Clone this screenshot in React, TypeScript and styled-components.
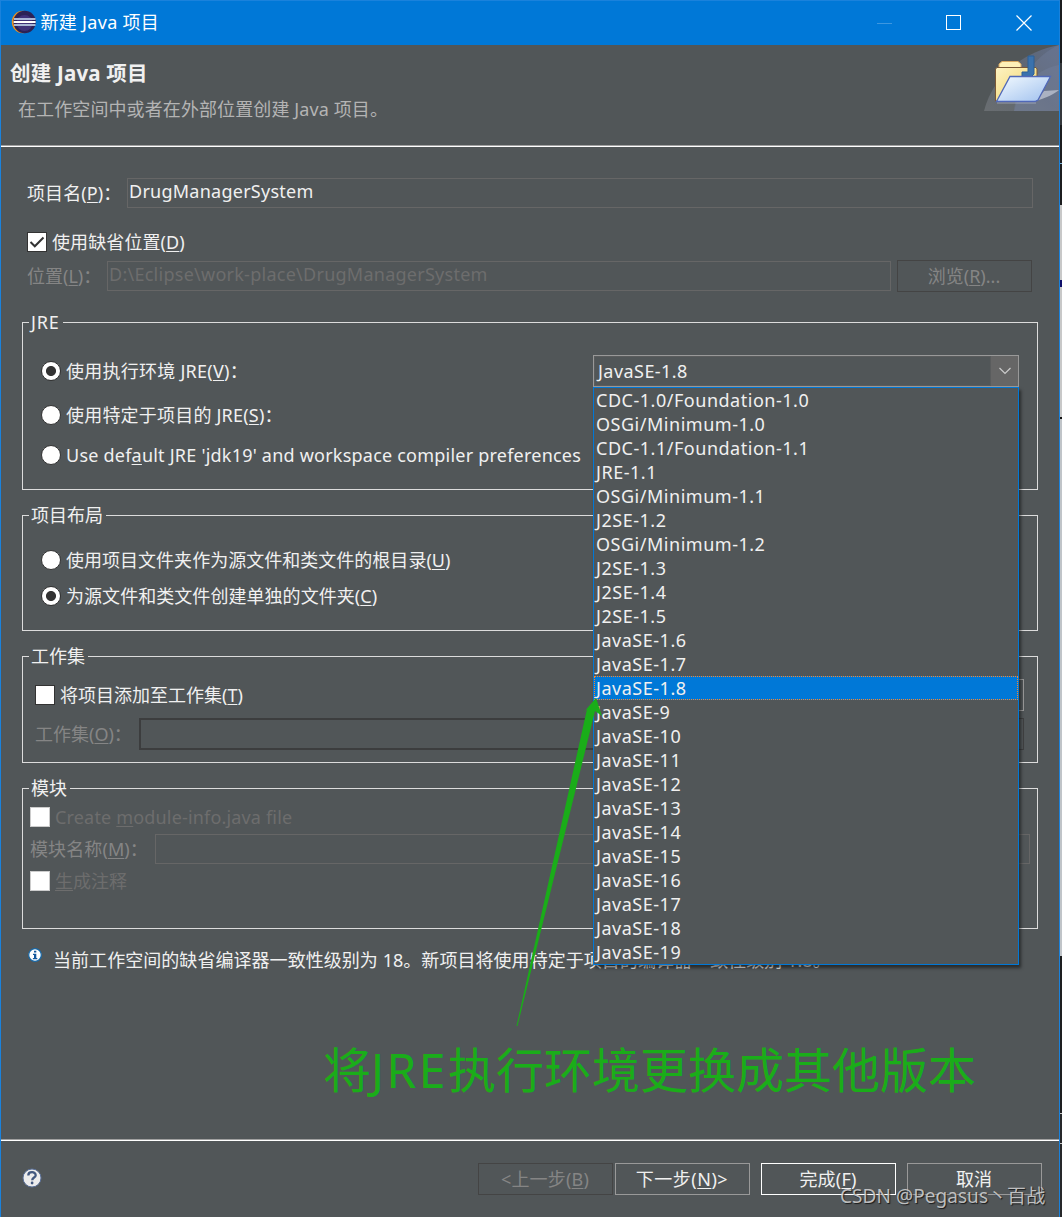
import React from "react";
import styled, { createGlobalStyle } from "styled-components";

const BG = "#515658";
const TEXT = "#f0f0f0";

const GlobalStyle = createGlobalStyle`
  * { box-sizing: border-box; }
  body { margin: 0; background: ${BG}; overflow: hidden; }
  body, button, input {
    font-family: "Noto Sans", "Noto Sans CJK SC", sans-serif;
    font-size: 18px;
    font-weight: 400;
  }
  u { text-decoration: underline; text-decoration-thickness: 1px; text-underline-offset: 2px; text-decoration-skip-ink: none; }
`;

const Screen = styled.div`
  position: relative;
  display: flex;
  width: 1062px;
  height: 1217px;
  overflow: hidden;
  color: ${TEXT};
`;

const Window = styled.div`
  display: flex;
  flex-direction: column;
  width: 1060px;
  height: 1217px;
  background: ${BG};
  border-left: 1px solid #1a82dc;
  border-right: 1px solid #1a82dc;
`;

const Backdrop = styled.div`
  display: flex;
  flex-direction: column;
  width: 2px;
`;
const Strip = styled.div<{ $h: number; $c: string }>`
  height: ${(p) => p.$h}px;
  background: ${(p) => p.$c};
`;

const TitleBar = styled.header`
  display: flex;
  align-items: center;
  height: 45px;
  flex: none;
  padding: 0 0 2px 10px;
  background: #0078d7;
  border-top: 1px solid #1a82dc;
  color: #fff;
`;
const WindowTitle = styled.span`
  flex: 1;
  margin-left: 4.5px;
  line-height: 24px;
  letter-spacing: 0.3px;
`;
const Caption = styled.div<{ $w?: number }>`
  display: flex;
  width: ${(p) => p.$w ?? 71}px;
  justify-content: center;
  padding-top: 1px;
`;

const Banner = styled.section`
  display: flex;
  justify-content: space-between;
  height: 102px;
  flex: none;
  border-bottom: 1px solid #fff;
  box-shadow: inset 0 -1px 0 #a0a0a0;
`;
const BannerText = styled.div`
  display: flex;
  flex-direction: column;
  padding: 16px 0 0 9px;
`;
const Heading = styled.h1`
  margin: 0;
  font-size: 20.5px;
  font-weight: 700;
  line-height: 24px;
  letter-spacing: 0.2px;
`;
const Description = styled.p`
  margin: 12px 0 0 8px;
  line-height: 24px;
  letter-spacing: 0.1px;
  color: #b4b4b4;
`;

const Body = styled.main`
  display: flex;
  flex-direction: column;
  height: 992px;
  flex: none;
  padding: 31px 21px 0;
`;

const Row = styled.div<{ $h: number; $mt?: number; $pl?: number; $pr?: number }>`
  display: flex;
  align-items: center;
  flex: none;
  height: ${(p) => p.$h}px;
  margin-top: ${(p) => p.$mt ?? 0}px;
  padding-left: ${(p) => p.$pl ?? 0}px;
  padding-right: ${(p) => p.$pr ?? 0}px;
`;

const Label = styled.span<{ $w?: number; $tone?: string; $ls?: number }>`
  flex: none;
  width: ${(p) => (p.$w ? p.$w + "px" : "auto")};
  line-height: 24px;
  white-space: pre;
  color: ${(p) => p.$tone ?? TEXT};
  letter-spacing: ${(p) => p.$ls ?? 0}px;
`;

const Field = styled.div<{ $tone?: string; $ls?: number }>`
  flex: 1;
  height: 30px;
  padding: 0 1px;
  line-height: 24px;
  border: 1px solid #666;
  color: ${(p) => p.$tone ?? TEXT};
  letter-spacing: ${(p) => p.$ls ?? 0}px;
`;

const Button = styled.button<{ $edge: string; $tone?: string; $ml?: number; $ls?: number }>`
  flex: none;
  width: 135px;
  height: 32px;
  margin: 0 0 0 ${(p) => p.$ml ?? 0}px;
  padding: 0 1px 0 0;
  line-height: 24px;
  background: ${BG};
  border: 1px solid ${(p) => p.$edge};
  color: ${(p) => p.$tone ?? TEXT};
  letter-spacing: ${(p) => p.$ls ?? 0}px;
`;

const Group = styled.section<{ $h: number; $mt: number }>`
  position: relative;
  display: flex;
  flex-direction: column;
  flex: none;
  height: ${(p) => p.$h}px;
  margin-top: ${(p) => p.$mt}px;
  border: 1px solid #dcdcdc;
`;
const Legend = styled.h2<{ $ls?: number }>`
  flex: none;
  align-self: flex-start;
  height: 24px;
  margin: -13px 0 0 6px;
  padding: 0 3px 0 2px;
  font-size: 18px;
  font-weight: 400;
  line-height: 24px;
  background: ${BG};
  letter-spacing: ${(p) => p.$ls ?? 0}px;
`;

const Radio = styled.span<{ $on?: boolean }>`
  flex: none;
  width: 20px;
  height: 20px;
  margin-right: 5px;
  border-radius: 50%;
  border: 1px solid #333;
  background: ${(p) => (p.$on ? "radial-gradient(circle, #333 4.6px, #fff 5.4px)" : "#fff")};
`;
const Box = styled.span<{ $edge?: string }>`
  display: flex;
  flex: none;
  align-items: center;
  justify-content: center;
  width: 20px;
  height: 20px;
  margin-right: 5px;
  background: #fff;
  border: 1px solid ${(p) => p.$edge ?? "#333"};
`;

const Combo = styled.div`
  position: relative;
  display: flex;
  width: 426px;
  height: 32px;
  margin-left: auto;
  border: 1px solid #999;
`;
const ComboValue = styled.span`
  flex: 1;
  padding: 0 3px;
  line-height: 28px;
  letter-spacing: 0.45px;
  border: 1px solid #5a5c5d;
`;
const ComboArrow = styled.span`
  display: flex;
  align-items: center;
  justify-content: center;
  width: 27px;
  background: #666;
`;
const Popup = styled.ul`
  position: absolute;
  z-index: 2;
  top: 31px;
  left: -1px;
  width: 426px;
  height: 578px;
  margin: 0;
  padding: 0;
  list-style: none;
  background: ${BG};
  border: 1px solid #0078d7;
  box-shadow: 2px 3px 3px rgba(0, 0, 0, 0.5);
`;
const Option = styled.li<{ $on: boolean }>`
  height: 24px;
  padding: 0 1px;
  line-height: 22px;
  letter-spacing: 0.52px;
  border: 1px dotted ${(p) => (p.$on ? "#ff8728" : "transparent")};
  background: ${(p) => (p.$on ? "#0078d7" : "transparent")};
`;
const EmptyCombo = styled.div`
  width: 744px;
  height: 32px;
  border: 2px solid #3c3d3e;
`;

const InfoSlot = styled.span`
  display: flex;
  align-self: flex-start;
  margin-right: 11px;
`;

const Footer = styled.footer`
  display: flex;
  align-items: flex-start;
  flex: 1;
  border-top: 1px solid #a0a0a0;
  box-shadow: inset 0 1px 0 #fff;
  padding: 23px 17px 0 21px;
`;
const HelpSlot = styled.div`
  flex: 1;
  padding-top: 5px;
`;

const ArrowMark = styled.svg`
  position: absolute;
  left: 500px;
  top: 690px;
  z-index: 5;
`;
const Note = styled.div`
  position: absolute;
  left: 323px;
  top: 1036px;
  z-index: 5;
  font-size: 48px;
  line-height: 68px;
  white-space: nowrap;
  color: #1aad19;
`;
const NoteLatin = styled.span`
  letter-spacing: 2.4px;
`;
const Watermark = styled.div`
  position: absolute;
  left: 840px;
  top: 1182px;
  z-index: 5;
  line-height: 28px;
  font-size: 19px;
  letter-spacing: 0.06px;
  white-space: nowrap;
  color: rgba(215, 215, 215, 0.85);
  text-shadow: 1px 1px 1px rgba(0, 0, 0, 0.7);
`;

const DIM = "#858585";
const DIMMER = "#6d6d6d";

const RUNTIMES = [
  "CDC-1.0/Foundation-1.0",
  "OSGi/Minimum-1.0",
  "CDC-1.1/Foundation-1.1",
  "JRE-1.1",
  "OSGi/Minimum-1.1",
  "J2SE-1.2",
  "OSGi/Minimum-1.2",
  "J2SE-1.3",
  "J2SE-1.4",
  "J2SE-1.5",
  "JavaSE-1.6",
  "JavaSE-1.7",
  "JavaSE-1.8",
  "JavaSE-9",
  "JavaSE-10",
  "JavaSE-11",
  "JavaSE-12",
  "JavaSE-13",
  "JavaSE-14",
  "JavaSE-15",
  "JavaSE-16",
  "JavaSE-17",
  "JavaSE-18",
  "JavaSE-19",
];

const EclipseLogo = () => (
  <svg width="25" height="24" viewBox="0 0 25 24">
    <circle cx="12" cy="12" r="11.2" fill="#f0941e" />
    <circle cx="13.6" cy="12" r="11.2" fill="#2c2255" />
    <circle cx="13.6" cy="13" r="8" fill="#473788" opacity=".7" />
    <rect x="3" y="8" width="21.5" height="2" fill="#a9b6d6" />
    <rect x="2.6" y="11" width="22" height="2" fill="#fff" />
    <rect x="3" y="14" width="21.5" height="2" fill="#a9b6d6" />
  </svg>
);

const ProjectIcon = () => (
  <svg width="75" height="66" viewBox="0 0 75 66">
    <defs>
      <linearGradient id="swoosh" x1="0" x2="1" y1="1" y2="0">
        <stop offset="0" stopColor="#74787c" />
        <stop offset=".5" stopColor="#646c78" />
        <stop offset="1" stopColor="#66759a" />
      </linearGradient>
      <linearGradient id="folder" x1="0" x2="1" y1="0" y2="1">
        <stop offset="0" stopColor="#fdf3c4" />
        <stop offset="1" stopColor="#f0d060" />
      </linearGradient>
      <linearGradient id="flap" x1="0" x2="1" y1="0" y2="1">
        <stop offset="0" stopColor="#f4fbff" />
        <stop offset="1" stopColor="#9fc0ee" />
      </linearGradient>
    </defs>
    <path d="M0 66C8 34 35 8 75 0V66Z" fill="url(#swoosh)" opacity=".7" />
    <path d="M30 66C32 40 48 12 75 0V66Z" fill="#7684a4" opacity=".3" />
    <path d="M30 66C36 40 54 24 75 20V66Z" fill="#7684a4" opacity=".3" />
    <path d="M52 56L60 46L75 45C70 49 62 53 52 56Z" fill="#bcc2d0" opacity=".8" />
    <path d="M15 23V19L18 16.500H34L37 19V23Z" fill="#fdf0b8" stroke="#d9a860" />
    <path d="M11.500 56V24L13 22.500H52L53 24V34L45 56Z" fill="url(#folder)" stroke="#7a5836" />
    <path d="M44 11H50V29L47 32H38V27H44Z" fill="#3a72ad" stroke="#2b5f96" />
    <path d="M12.500 56.500L26 31.500H66.500L54 55L51 56.500Z" fill="url(#flap)" stroke="#5068b8" strokeWidth="1.300" />
    <path d="M13 58H52" stroke="#c9cde0" opacity=".5" />
  </svg>
);

const InfoIcon = () => (
  <svg width="14" height="14" viewBox="0 0 14 14">
    <circle cx="7" cy="7" r="6.300" fill="#fff" stroke="#1668a8" strokeWidth="1.200" />
    <path d="M6 2.700H8.300V4.500H6ZM5 5.700H8.300V10H9.300V11.200H4.900V10H6V6.900H5Z" fill="#14589c" />
  </svg>
);

const HelpIcon = () => (
  <svg width="20" height="20" viewBox="0 0 20 20">
    <circle cx="10" cy="10" r="9" fill="#ececec" stroke="#5a7099" strokeWidth="1" />
    <path d="M6.300 7.400C6.300 3.200 13.700 3.200 13.700 7.200C13.700 9.600 10.200 9.500 10.200 12.200" fill="none" stroke="#42587f" strokeWidth="2.300" />
    <circle cx="10.100" cy="15" r="1.400" fill="#42587f" />
  </svg>
);

export default function App() {
  return (
    <Screen>
      <GlobalStyle />
      <Window>
        <TitleBar>
          <EclipseLogo />
          <WindowTitle>新建 Java 项目</WindowTitle>
          <Caption $w={67}>
            <svg width="16" height="16"><path d="M0 8.500H15" stroke="#3d97e0" /></svg>
          </Caption>
          <Caption>
            <svg width="16" height="16"><rect x=".5" y=".5" width="14" height="14" fill="none" stroke="#fff" /></svg>
          </Caption>
          <Caption $w={70}>
            <svg width="16" height="16"><path d="M.5.5L15.500 15.500M15.500.5L.5 15.500" stroke="#fff" strokeWidth="1.200" /></svg>
          </Caption>
        </TitleBar>

        <Banner>
          <BannerText>
            <Heading>创建 Java 项目</Heading>
            <Description>在工作空间中或者在外部位置创建 Java 项目。</Description>
          </BannerText>
          <ProjectIcon />
        </Banner>

        <Body>
          <Row $h={30} $pl={5} $pr={5}>
            <Label $w={100} $ls={0.1}>项目名(<u>P</u>)：</Label>
            <Field $ls={0.25}>DrugManagerSystem</Field>
          </Row>
          <Row $h={20} $mt={24} $pl={5}>
            <Box>
              <svg width="16" height="14"><path d="M1.500 7L5.800 11.300L14.500 2.500" fill="none" stroke="#333" strokeWidth="2" /></svg>
            </Box>
            <Label $ls={0.1}>使用缺省位置(<u>D</u>)</Label>
          </Row>
          <Row $h={32} $mt={8} $pl={5} $pr={6}>
            <Label $w={80} $tone={DIM}>位置(<u>L</u>)：</Label>
            <Field $tone={DIMMER} $ls={0.26}>D:\Eclipse\work-place\DrugManagerSystem</Field>
            <Button $edge="#444" $tone={DIM} $ml={6}>浏览(<u>R</u>)...</Button>
          </Row>

          <Group $h={168} $mt={30}>
            <Legend $ls={0.8}>JRE</Legend>
            <Row $h={32} $mt={21} $pl={18} $pr={18}>
              <Radio $on />
              <Label $ls={0.25}>使用执行环境 JRE(<u>V</u>)：</Label>
              <Combo>
                <ComboValue>JavaSE-1.8</ComboValue>
                <ComboArrow>
                  <svg width="12" height="8"><path d="M.5 1L6 6.500L11.500 1" fill="none" stroke="#ccc" strokeWidth="1.200" /></svg>
                </ComboArrow>
                <Popup>
                  {RUNTIMES.map((name) => (
                    <Option key={name} $on={name === "JavaSE-1.8"}>{name}</Option>
                  ))}
                </Popup>
              </Combo>
            </Row>
            <Row $h={24} $mt={16} $pl={18}>
              <Radio />
              <Label $ls={0.2}>使用特定于项目的 JRE(<u>S</u>)：</Label>
            </Row>
            <Row $h={24} $mt={16} $pl={18}>
              <Radio />
              <Label $ls={0.22}>Use def<u>a</u>ult JRE 'jdk19' and workspace compiler preferences</Label>
            </Row>
          </Group>

          <Group $h={116} $mt={25}>
            <Legend>项目布局</Legend>
            <Row $h={24} $mt={21} $pl={18}>
              <Radio />
              <Label $ls={0.02}>使用项目文件夹作为源文件和类文件的根目录(<u>U</u>)</Label>
            </Row>
            <Row $h={24} $mt={12} $pl={18}>
              <Radio $on />
              <Label $ls={0.05}>为源文件和类文件创建单独的文件夹(<u>C</u>)</Label>
            </Row>
          </Group>

          <Group $h={107} $mt={25}>
            <Legend>工作集</Legend>
            <Row $h={32} $mt={11} $pl={12} $pr={13}>
              <Box />
              <Label $w={824}>将项目添加至工作集(<u>T</u>)</Label>
              <Button $edge="#999" $ml={5} />
            </Row>
            <Row $h={32} $mt={7} $pl={12} $pr={13}>
              <Label $w={104} $tone={DIM}>工作集(<u>O</u>)：</Label>
              <EmptyCombo />
              <Button $edge="#3f4041" $ml={6} />
            </Row>
          </Group>

          <Group $h={141} $mt={25}>
            <Legend>模块</Legend>
            <Row $h={20} $mt={7} $pl={7}>
              <Box $edge="#ccc" />
              <Label $tone={DIMMER} $ls={0.17}>Create <u>m</u>odule-info.java file</Label>
            </Row>
            <Row $h={30} $mt={7} $pl={7} $pr={7}>
              <Label $w={125} $tone={DIM} $ls={0.1}>模块名称(<u>M</u>)：</Label>
              <Field />
            </Row>
            <Row $h={20} $mt={7} $pl={7}>
              <Box $edge="#ccc" />
              <Label $tone={DIMMER}><u>生</u>成注释</Label>
            </Row>
          </Group>

          <Row $h={24} $mt={19} $pl={6}>
            <InfoSlot>
              <InfoIcon />
            </InfoSlot>
            <Label $ls={0.05}>当前工作空间的缺省编译器一致性级别为 18。新项目将使用特定于项目的编译器一致性级别 1.8。</Label>
          </Row>
        </Body>

        <Footer>
          <HelpSlot>
            <HelpIcon />
          </HelpSlot>
          <Button $edge="#444" $tone={DIM} $ls={0.2}>&lt;上一步(<u>B</u>)</Button>
          <Button $edge="#999" $ml={2} $ls={0.5}>下一步(<u>N</u>)&gt;</Button>
          <Button $edge="#fff" $ml={11} $ls={0.2}>完成(<u>F</u>)</Button>
          <Button $edge="#999" $ml={11}>取消</Button>
        </Footer>
      </Window>

      <Backdrop>
        <Strip $h={63} $c="#1b1c1e" />
        <Strip $h={62} $c="#35383c" />
        <Strip $h={38} $c="#1c1d1f" />
        <Strip $h={1} $c="#7db4d8" />
        <Strip $h={41} $c="#1c1d1f" />
        <Strip $h={75} $c="#c8c8c8" />
        <Strip $h={7} $c="#10106a" />
        <Strip $h={130} $c="#c8c8c8" />
        <Strip $h={2} $c="#111" />
        <Strip $h={537} $c="#c0c4c8" />
        <Strip $h={157} $c="#1d1e20" />
        <Strip $h={1} $c="#c8c8c8" />
        <Strip $h={29} $c="#26282a" />
        <Strip $h={1} $c="#c8c8c8" />
        <Strip $h={73} $c="#26282a" />
      </Backdrop>

      <ArrowMark width="110" height="340" viewBox="500 690 110 340">
        <path d="M596 698L602 716L595 711L517.500 1026H516.500L587 709L583 713Z" fill="#1aad19" />
      </ArrowMark>
      <Note>将<NoteLatin>JRE</NoteLatin>执行环境更换成其他版本</Note>
      <Watermark>CSDN @Pegasus丶百战</Watermark>
    </Screen>
  );
}
